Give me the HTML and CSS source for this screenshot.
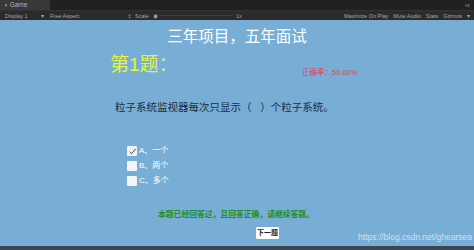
FILE: index.html
```html
<!DOCTYPE html>
<html>
<head>
<meta charset="utf-8">
<link rel="stylesheet" href="styles.css">
</head>
<body>
<div class="editor">
  <div class="tabbar">
    <div class="tab"><span class="tab-icon">◖</span>Game</div>
    <div class="tab-menu">▪≡</div>
  </div>
  <div class="toolbar">
    <span class="tb tb-display">Display 1</span>
    <span class="tb tb-arrow">▾</span>
    <span class="tb tb-aspect">Free Aspect</span>
    <span class="tb tb-arrow2">‡</span>
    <span class="tb tb-scale">Scale</span>
    <span class="tb tb-knob">◉</span>
    <span class="tb-slider"></span>
    <span class="tb tb-x">1x</span>
    <span class="tb-spacer"></span>
    <span class="tb">Maximize On Play</span>
    <span class="tb">Mute Audio</span>
    <span class="tb">Stats</span>
    <span class="tb">Gizmos</span>
    <span class="tb tb-arrow3">▾</span>
  </div>
  <div class="game">
    <div class="title">三年项目，五年面试</div>
    <div class="head-row">
      <div class="qnum">第1题：</div>
      <div class="rate">正确率：50.00%</div>
    </div>
    <div class="question">粒子系统监视器每次只显示（&nbsp;&nbsp;&nbsp;）个粒子系统。</div>
    <div class="options">
      <div class="opt"><span class="box"><svg viewBox="0 0 10 10" width="9" height="9"><path d="M1.6 5.3 L3.9 7.5 L8.5 2" fill="none" stroke="#333" stroke-width="1"/></svg></span><span class="opt-text">A、一个</span></div>
      <div class="opt"><span class="box"></span><span class="opt-text">B、两个</span></div>
      <div class="opt"><span class="box"></span><span class="opt-text">C、多个</span></div>
    </div>
    <div class="msg">本题已经回答过，且回答正确，请继续答题。</div>
    <div class="btn-row"><div class="btn">下一题</div></div>
    <div class="watermark">https://blog.csdn.net/ghearsea</div>
  </div>
  <div class="bottom"></div>
</div>
</body>
</html>
```

FILE: styles.css
```css
html, body {
  margin: 0;
  padding: 0;
  width: 474px;
  height: 250px;
  overflow: hidden;
  background: #222;
}
.editor {
  width: 474px;
  height: 250px;
  display: flex;
  flex-direction: column;
  font-family: "Liberation Sans", "Noto Sans CJK SC", sans-serif;
}
.tabbar {
  height: 10px;
  background: #212121;
  display: flex;
  align-items: stretch;
  justify-content: space-between;
}
.tab {
  width: 50px;
  background: #383838;
  color: #b4b4b4;
  font-size: 6.5px;
  line-height: 10px;
  padding-left: 4px;
  box-sizing: border-box;
}
.tab-icon {
  margin-right: 2px;
  font-size: 6px;
}
.tab-menu {
  color: #9a9a9a;
  font-size: 5px;
  line-height: 10px;
  padding-right: 4px;
}
.toolbar {
  height: 10px;
  background: #2b2b2b;
  border-top: 1px solid #333;
  box-sizing: border-box;
  display: flex;
  align-items: center;
  padding: 0 4px 0 5px;
  color: #a8a8a8;
  font-size: 5.5px;
  white-space: nowrap;
}
.tb {
  margin-right: 5px;
}
.tb-display { width: 36px; margin-right: 0; }
.tb-arrow { width: 9px; margin-right: 0; }
.tb-aspect { width: 78px; margin-right: 0; }
.tb-arrow2 { width: 7px; margin-right: 0; }
.tb-scale { width: 18px; margin-right: 0; }
.tb-knob { margin-right: 1px; font-size: 5px; }
.tb-slider {
  width: 74px;
  height: 1px;
  background: #3e3e3e;
  margin-right: 3px;
}
.tb-x { margin-right: 0; }
.tb-spacer { flex: 1; }
.tb-arrow3 { margin-right: 0; }
.game {
  flex: 1;
  background: #78aed6;
  position: relative;
  display: flex;
  flex-direction: column;
  padding-top: 8px;
}
.title {
  text-align: center;
  color: #ffffff;
  font-size: 15.5px;
  line-height: 18px;
}
.head-row {
  display: flex;
  align-items: flex-end;
  margin-top: 8px;
  padding-left: 110px;
}
.qnum {
  color: #e4f53a;
  font-size: 19px;
  line-height: 22px;
  width: 192px;
}
.rate {
  color: #e23a55;
  font-size: 7.5px;
  line-height: 10px;
  margin-bottom: -2px;
}
.question {
  margin-top: 24px;
  padding-left: 115px;
  color: #1c2c3c;
  font-size: 10.5px;
  line-height: 14px;
}
.options {
  margin-top: 32px;
  padding-left: 127px;
  display: flex;
  flex-direction: column;
  gap: 5px;
}
.opt {
  display: flex;
  align-items: center;
  height: 10px;
}
.box {
  width: 10px;
  height: 10px;
  background: #f4f4f4;
  border-radius: 1px;
  display: flex;
  align-items: center;
  justify-content: center;
  margin-right: 2px;
}
.opt-text {
  color: #ffffff;
  font-size: 8px;
  line-height: 10px;
}
.msg {
  margin-top: 24px;
  padding-left: 158px;
  color: #1e8f23;
  font-size: 7.8px;
  line-height: 10px;
  font-weight: bold;
}
.btn-row {
  margin-top: 7px;
  padding-left: 256px;
  display: flex;
}
.btn {
  width: 23px;
  height: 12px;
  background: #ffffff;
  color: #222;
  font-size: 7px;
  line-height: 12px;
  text-align: center;
  font-weight: bold;
  border-radius: 1px;
}
.watermark {
  position: absolute;
  right: 2px;
  bottom: 4px;
  color: rgba(235, 242, 250, 0.75);
  font-size: 8.5px;
  font-family: "Liberation Sans", sans-serif;
}
.bottom {
  height: 4px;
  background: #3b4654;
}
```
